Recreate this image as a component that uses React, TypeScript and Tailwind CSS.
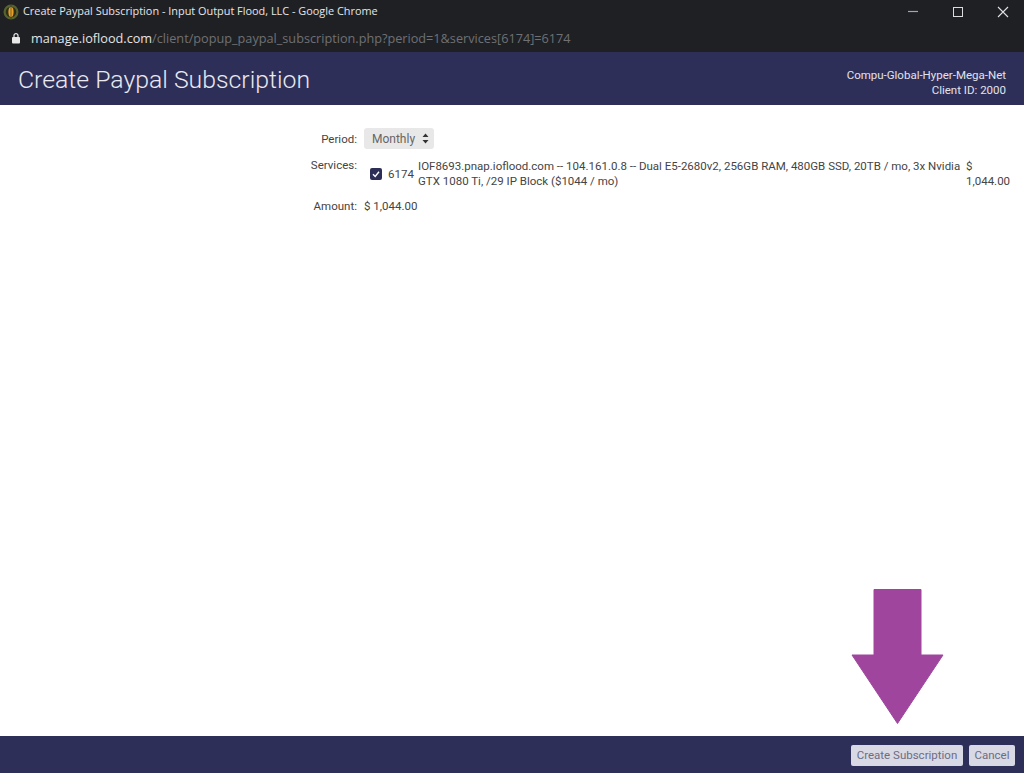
import React from "react";

function Favicon() {
  return (
    <svg width="16" height="16" viewBox="0 0 16 16" className="shrink-0">
      <circle cx="8" cy="8" r="6.4" fill="#2e2f18" stroke="#56632f" strokeWidth="2.2" />
      <ellipse cx="8" cy="8" rx="2.6" ry="5" fill="#e8a12c" />
      <path d="M8 1 V15" stroke="#3a3a1c" strokeWidth="0.6" />
    </svg>
  );
}

export default function App() {
  return (
    <div className="relative flex h-[773px] w-[1024px] flex-col overflow-hidden bg-white font-['Roboto',sans-serif]">
      {/* Chrome window */}
      <div className="flex h-[52px] shrink-0 flex-col bg-[#1f2024]">
        <div className="flex h-[23px] items-center">
          <div className="ml-[3px] flex items-center gap-[4px]">
            <Favicon />
            <span className="text-[10.9px] leading-none text-[#e6e6e8] font-['Open_Sans',sans-serif]">
              Create Paypal Subscription - Input Output Flood, LLC - Google Chrome
            </span>
          </div>
          <div className="ml-auto flex items-center">
            <svg width="12" height="12" viewBox="0 0 12 12" className="mr-[33px]">
              <path d="M1 5.5 H11" stroke="#a5a6a9" strokeWidth="1.2" />
            </svg>
            <svg width="12" height="12" viewBox="0 0 12 12" className="mr-[33px]">
              <rect x="1.5" y="1.5" width="9" height="9" fill="none" stroke="#dcdcde" strokeWidth="1" />
            </svg>
            <svg width="12" height="12" viewBox="0 0 12 12" className="mr-[15px]">
              <path d="M1 1 L11 11 M11 1 L1 11" stroke="#e2e2e4" strokeWidth="1.1" />
            </svg>
          </div>
        </div>
        <div className="flex h-[29px] items-center pt-[1px]">
          <svg width="10" height="12" viewBox="0 0 10 12" className="ml-[11px]">
            <rect x="1" y="5" width="8" height="6.5" rx="1" fill="#e8e8e8" />
            <path d="M3 5 V3.6 a2 2 0 0 1 4 0 V5" fill="none" stroke="#e8e8e8" strokeWidth="1.2" />
          </svg>
          <span className="ml-[10px] text-[12.7px] leading-none font-['Open_Sans',sans-serif]">
            <span className="text-[#e4e4e6]">manage.ioflood.com</span>
            <span className="text-[#6f7073]">/client/popup_paypal_subscription.php?period=1&amp;services[6174]=6174</span>
          </span>
        </div>
      </div>

      {/* Page header */}
      <header className="flex h-[53px] shrink-0 items-center justify-between bg-[#2e2f59] pl-[18px] pr-[18px]">
        <h1 className="pt-[3px] text-[24.8px] font-light leading-none text-[#e9e9ef]">Create Paypal Subscription</h1>
        <div className="pt-[8px] text-right text-[11.5px] leading-[15px] text-[#e2e2ea]">
          <div>Compu-Global-Hyper-Mega-Net</div>
          <div>Client ID: 2000</div>
        </div>
      </header>

      {/* Form */}
      <main className="min-h-0 flex-1 pt-[23px] text-[11.5px] leading-[15px] text-[#444444]">
        <div className="grid grid-cols-[357px_1fr] gap-x-[7px]">
          <div className="flex h-[22px] items-center justify-end">Period:</div>
          <div>
            <div className="flex h-[21px] w-[70px] items-center justify-between rounded-[3px] bg-[#e8e8e8] pl-[8px] pr-[5px] pt-[1px] text-[12px] text-[#666666]">
              <span>Monthly</span>
              <svg width="7" height="11" viewBox="0 0 7 11" className="-mt-[1px]">
                <path d="M3.5 0.5 L6.5 4 H0.5 Z M3.5 10.5 L6.5 7 H0.5 Z" fill="#333333" />
              </svg>
            </div>
          </div>

          <div className="mt-[8px] text-right">Services:</div>
          <div className="mt-[9px] flex w-[646px]">
            <div className="ml-[6px] flex h-[30px] w-[48px] shrink-0 items-center">
              <span className="flex h-[12px] w-[12px] items-center justify-center rounded-[2px] bg-[#2d2e57]">
                <svg width="10" height="10" viewBox="0 0 10 10">
                  <path d="M2 5.2 L4.2 7.4 L8 2.8" fill="none" stroke="#ffffff" strokeWidth="1.4" />
                </svg>
              </span>
              <span className="ml-[6px]">6174</span>
            </div>
            <div className="w-[546px] shrink-0">
              IOF8693.pnap.ioflood.com -- 104.161.0.8 -- Dual E5-2680v2, 256GB RAM, 480GB SSD, 20TB / mo, 3x Nvidia GTX 1080 Ti, /29 IP Block ($1044 / mo)
            </div>
            <div className="ml-[2px] w-[50px] shrink-0">
              $<br />1,044.00
            </div>
          </div>

          <div className="mt-[10px] text-right">Amount:</div>
          <div className="mt-[10px]">$ 1,044.00</div>
        </div>
      </main>

      {/* Footer */}
      <footer className="flex h-[37px] shrink-0 items-center justify-end gap-[6px] bg-[#2e2f59] pr-[9px] pt-[1px]">
        <button className="flex h-[21px] w-[112px] items-center justify-center rounded-[2px] bg-[#d9d9e6] pt-[1px] text-[11.5px] text-[#6c6c85]">
          Create Subscription
        </button>
        <button className="flex h-[21px] w-[46px] items-center justify-center rounded-[2px] bg-[#d9d9e6] pt-[1px] text-[11.5px] text-[#6c6c85]">
          Cancel
        </button>
      </footer>

      {/* Annotation arrow */}
      <svg width="94" height="137" viewBox="0 0 94 137" className="absolute left-[851px] top-[589px]">
        <path d="M23 0.5 H70 V66 H92 L46.5 134.5 L1 66 H23 Z" fill="#a0459e" stroke="#a0459e" strokeLinejoin="round" />
      </svg>
    </div>
  );
}
